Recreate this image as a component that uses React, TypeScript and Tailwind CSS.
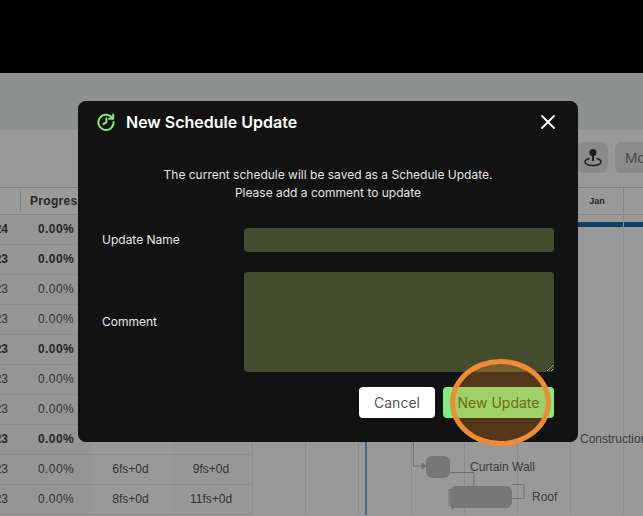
const rows = [
  { date: '24', bold: true, pred: '', succ: '' },
  { date: '23', bold: true, pred: '', succ: '' },
  { date: '23', bold: false, pred: '', succ: '' },
  { date: '23', bold: false, pred: '', succ: '' },
  { date: '23', bold: true, pred: '', succ: '' },
  { date: '23', bold: false, pred: '', succ: '' },
  { date: '23', bold: false, pred: '', succ: '' },
  { date: '23', bold: true, pred: '', succ: '' },
  { date: '23', bold: false, pred: '6fs+0d', succ: '9fs+0d' },
  { date: '23', bold: false, pred: '8fs+0d', succ: '11fs+0d' },
];

const months = [0, 1, 2, 3, 4, 5, 6, 7];

function HistoryIcon() {
  return (
    <svg width="18" height="18" viewBox="0 0 18 18" fill="none" stroke="#7fe87a" strokeWidth="2" strokeLinecap="round" strokeLinejoin="round">
      <path d="M15.6 5.6A7.6 7.6 0 1 0 16.6 9" />
      <path d="M16.2 1.6v4.2h-4.2" />
      <path d="M9.4 5.2v4.2l-3 1.6" />
    </svg>
  );
}

function CloseIcon() {
  return (
    <svg width="14" height="14" viewBox="0 0 14 14" fill="none" stroke="#ffffff" strokeWidth="1.8" strokeLinecap="round">
      <path d="M1 1l12 12M13 1L1 13" />
    </svg>
  );
}

function PinIcon() {
  return (
    <svg width="20" height="20" viewBox="0 0 20 20" fill="none" stroke="#1f1f1f" strokeWidth="1.5">
      <circle cx="10" cy="4.5" r="2.8" fill="#1f1f1f" />
      <path d="M10 7v6" strokeWidth="2" />
      <path d="M6.5 10.5C3.8 11.2 2 12.4 2 14c0 2 3.6 3.5 8 3.5s8-1.500 8-3.500c0-1.600-1.800-2.800-4.500-3.500" />
    </svg>
  );
}

function GanttLinks() {
  return (
    <svg className="absolute left-0 top-0" width="391" height="329" fill="none" stroke="#6f6f6f" strokeWidth="1">
      <path d="M161.500 242v36h9" />
      <path d="M198 284.500h24v17h-25v16h8" />
      <path d="M260 296.500h12v14h-24v10" />
      <path d="M174 278l-4-3v6zM204 318l-4-3v6z" fill="#6f6f6f" />
    </svg>
  );
}

export default function App() {
  return (
    <div className="relative h-[516px] w-[643px] overflow-hidden bg-[#999a9a] font-['Liberation_Sans',sans-serif] text-[#262626]">
      <div className="h-[73px] bg-black" />
      <div className="h-[57px] bg-[#8e9090]" />
      <div className="flex h-[58px] items-center justify-end gap-[7px] border-b border-[#7d7d7d] bg-[#999999] pb-[2px]">
        <div className="flex h-[31px] w-[31px] items-center justify-center rounded-md bg-[#8a8a8a]">
          <PinIcon />
        </div>
        <div className="h-[31px] w-[28px] rounded-l-md bg-[#8a8a8a] pl-[10px] text-[15px] leading-[31px] text-[#4a4a4a]">
          <span className="whitespace-nowrap">Mo</span>
        </div>
      </div>

      <div className="flex">
        <div className="w-[252px] shrink-0">
          <div className="flex h-[27px] items-center border-b border-[#888888] bg-[#9a9a9a] text-xs font-bold">
            <div className="h-[21px] w-[21px] border-r border-[#808080]" />
            <div className="pl-[9px] text-[12px] tracking-[0.3px]">Progress</div>
          </div>
          {rows.map((row, i) => (
            <div key={i} className={`flex h-[30px] items-center border-b border-[#8c8c8c] text-[12px] ${row.bold ? 'font-bold' : 'text-[#333333]'}`}>
              <div className="w-[22px] shrink-0 overflow-hidden text-right bg-[#959595] h-full leading-[29px] pr-[14px] [direction:rtl]">{row.date}</div>
              <div className="h-full w-[70px] shrink-0 bg-[#959595] pl-[16px] tracking-[0.4px] leading-[29px]">0.00%</div>
              <div className="h-full w-[80px] shrink-0 bg-[#999999] text-center leading-[29px] pr-[3px]">{row.pred}</div>
              <div className="h-full w-[80px] shrink-0 bg-[#979797] text-center leading-[29px] pr-[2px]">{row.succ}</div>
            </div>
          ))}
        </div>

        <div className="relative flex-1 bg-[#999999]">
          <div className="flex h-[27px] border-b border-[#888888]">
            {months.map((m) => (
              <div key={m} className="w-[53px] shrink-0 border-l border-[#858585] text-center text-[9px] font-bold leading-[26px]">
                {m === 6 ? 'Jan' : m === 7 ? 'F' : ''}
              </div>
            ))}
          </div>
          <div className="h-[5px] bg-[#0f3f62] mt-[7px]" />
          <div className="absolute inset-0 top-[27px] flex">
            {months.map((m) => (
              <div key={m} className="w-[53px] shrink-0 border-l border-[#8c8c8c]" />
            ))}
          </div>
          <div className="absolute bottom-0 left-[113px] top-[27px] w-[2px] bg-[#3f6f80]" />
          <div className="absolute left-0 top-0">
            <GanttLinks />
          </div>
          <div className="absolute left-[328px] top-[242px] whitespace-nowrap text-[12px] text-[#3c3c3c]">Construction</div>
          <div className="absolute left-[174px] top-[268px] h-[22px] w-[24px] rounded-md bg-[#777777]" />
          <div className="absolute left-[218px] top-[270px] whitespace-nowrap text-[12px] text-[#3c3c3c]">Curtain Wall</div>
          <div className="absolute left-[198px] top-[298px] h-[22px] w-[62px] rounded-md bg-[#777777]" />
          <div className="absolute left-[280px] top-[300px] whitespace-nowrap text-[12px] text-[#3c3c3c]">Roof</div>
        </div>
      </div>

      <div className="absolute left-[78px] top-[101px] h-[341px] w-[500px] rounded-lg bg-[#121212] px-6 font-['Inter',sans-serif] text-white">
        <div className="flex h-[42px] items-center">
          <div className="-ml-[5px] mr-[11px]">
            <HistoryIcon />
          </div>
          <div className="text-[16px] font-semibold">New Schedule Update</div>
          <div className="ml-auto -mr-[1px]">
            <CloseIcon />
          </div>
        </div>
        <div className="mt-[23px] text-center text-[12px] leading-[18px] text-[#e4e4e4]">
          <p>The current schedule will be saved as a Schedule Update.</p>
          <p>Please add a comment to update</p>
        </div>
        <div className="mt-[26px] flex items-center">
          <label className="w-[142px] text-[12px] text-[#e8e8e8]">Update Name</label>
          <input className="h-[24px] w-[310px] rounded bg-[#434d2d]" />
        </div>
        <div className="mt-[20px] flex items-center">
          <label className="w-[142px] text-[12px] text-[#e8e8e8]">Comment</label>
          <textarea className="h-[100px] w-[310px] rounded bg-[#434d2d] [color-scheme:dark]" />
        </div>
        <div className="mt-[15px] flex justify-end gap-2">
          <button className="h-[31px] w-[76px] rounded bg-white text-[14px] text-[#555555]">Cancel</button>
          <button className="h-[31px] w-[111px] rounded bg-[#7cf07e] text-[14px] text-[#3c5a12]">New Update</button>
        </div>
      </div>

      <div className="absolute left-[450px] top-[359px] h-[87px] w-[101px] rounded-[50%] border-[5px] border-[#f08a35] bg-[#f08c32]/30" />
    </div>
  );
}
